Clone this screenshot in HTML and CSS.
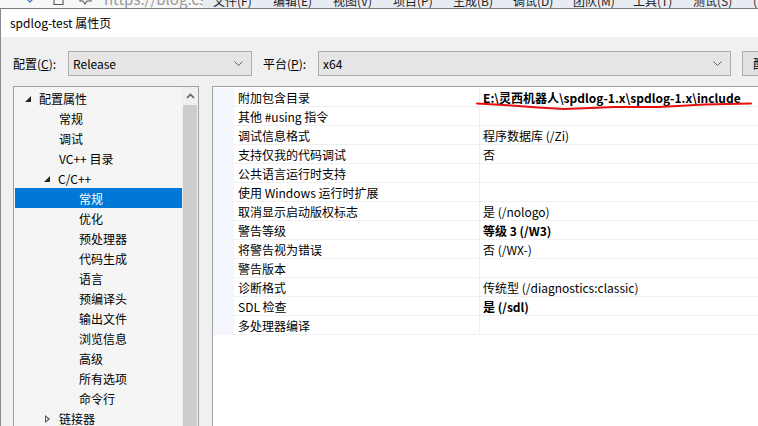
FILE: index.html
```html
<!DOCTYPE html>
<html lang="zh-CN">
<head>
    <meta charset="UTF-8">
    <title>spdlog-test 属性页</title>
    <link rel="stylesheet" href="styles.css">
</head>
<body>

    <div id="strip">
        <div class="browser-bar">
            <svg class="ico ico-fav" width="12" height="10" viewBox="0 0 12 10"><path d="M1 0 L6 5 L11 0" fill="none" stroke="#3a66c4" stroke-width="1.2"/></svg>
            <svg class="ico ico-tab" width="11" height="10" viewBox="0 0 11 10"><path d="M1 0 V7.5 H10 V0" fill="none" stroke="#555" stroke-width="1.1"/></svg>
            <svg class="ico ico-chat" width="13" height="10" viewBox="0 0 13 10"><path d="M1 0 V4 H4 L6 7 L8 4 H12 V0" fill="none" stroke="#555" stroke-width="1.1"/></svg>
            <span class="url">https://blog.csdn.net</span>
        </div>
        <div class="menu-bar">
            <span>文件(F)</span>
            <span>编辑(E)</span>
            <span>视图(V)</span>
            <span>项目(P)</span>
            <span>生成(B)</span>
            <span>调试(D)</span>
            <span>团队(M)</span>
            <span>工具(T)</span>
            <span>测试(S)</span>
            <span>(</span>
        </div>
    </div>

    <div id="dialog">
        <div class="title-bar">spdlog-test 属性页</div>

        <div class="dialog-body">
            <div class="config-row">
                <span class="label">配置(<u>C</u>):</span>
                <div class="combo combo-config">
                    <span>Release</span>
                    <svg width="9" height="6" viewBox="0 0 9 6"><path d="M0.5 0.5 L4.5 4.5 L8.5 0.5" fill="none" stroke="#606060" stroke-width="1"/></svg>
                </div>
                <span class="label label-platform">平台(<u>P</u>):</span>
                <div class="combo combo-platform">
                    <span>x64</span>
                    <svg width="9" height="6" viewBox="0 0 9 6"><path d="M0.5 0.5 L4.5 4.5 L8.5 0.5" fill="none" stroke="#606060" stroke-width="1"/></svg>
                </div>
                <div class="manager-btn">配置管理器(<u>O</u>)...</div>
            </div>

            <div class="panes">
                <div id="tree">
                    <ul class="tree-items">
                        <li class="lvl0"><span class="tw open"></span>配置属性</li>
                        <li class="lvl1">常规</li>
                        <li class="lvl1">调试</li>
                        <li class="lvl1">VC++ 目录</li>
                        <li class="lvl1"><span class="tw open"></span>C/C++</li>
                        <li class="lvl2 selected">常规</li>
                        <li class="lvl2">优化</li>
                        <li class="lvl2">预处理器</li>
                        <li class="lvl2">代码生成</li>
                        <li class="lvl2">语言</li>
                        <li class="lvl2">预编译头</li>
                        <li class="lvl2">输出文件</li>
                        <li class="lvl2">浏览信息</li>
                        <li class="lvl2">高级</li>
                        <li class="lvl2">所有选项</li>
                        <li class="lvl2">命令行</li>
                        <li class="lvl1"><span class="tw closed"></span>链接器</li>
                    </ul>
                    <div class="scrollbar">
                        <div class="scroll-up">
                            <svg width="9" height="6" viewBox="0 0 9 6"><path d="M1 5 L4.5 1.5 L8 5" fill="none" stroke="#606060" stroke-width="1.6"/></svg>
                        </div>
                        <div class="scroll-thumb"></div>
                    </div>
                </div>

                <div id="props">
                    <div class="prop-row"><div class="gutter"></div><div class="name">附加包含目录</div><div class="value bold">E:\灵西机器人\spdlog-1.x\spdlog-1.x\include</div></div>
                    <div class="prop-row"><div class="gutter"></div><div class="name">其他 #using 指令</div><div class="value"></div></div>
                    <div class="prop-row"><div class="gutter"></div><div class="name">调试信息格式</div><div class="value">程序数据库 (/Zi)</div></div>
                    <div class="prop-row"><div class="gutter"></div><div class="name">支持仅我的代码调试</div><div class="value">否</div></div>
                    <div class="prop-row"><div class="gutter"></div><div class="name">公共语言运行时支持</div><div class="value"></div></div>
                    <div class="prop-row"><div class="gutter"></div><div class="name">使用 Windows 运行时扩展</div><div class="value"></div></div>
                    <div class="prop-row"><div class="gutter"></div><div class="name">取消显示启动版权标志</div><div class="value">是 (/nologo)</div></div>
                    <div class="prop-row"><div class="gutter"></div><div class="name">警告等级</div><div class="value bold">等级 3 (/W3)</div></div>
                    <div class="prop-row"><div class="gutter"></div><div class="name">将警告视为错误</div><div class="value">否 (/WX-)</div></div>
                    <div class="prop-row"><div class="gutter"></div><div class="name">警告版本</div><div class="value"></div></div>
                    <div class="prop-row"><div class="gutter"></div><div class="name">诊断格式</div><div class="value">传统型 (/diagnostics:classic)</div></div>
                    <div class="prop-row"><div class="gutter"></div><div class="name">SDL 检查</div><div class="value bold">是 (/sdl)</div></div>
                    <div class="prop-row"><div class="gutter"></div><div class="name">多处理器编译</div><div class="value"></div></div>

                    <!-- hand-drawn red mark under the include path -->
                    <svg class="scribble" width="600" height="40" viewBox="0 0 600 40">
                        <path d="M264 16.5 L291 18 L325 20.5 L351 22 L378 21 L401 20 L445 20 L465 19 L491 17.5 L538 16.5" fill="none" stroke="#e3100f" stroke-width="2" stroke-linecap="round" stroke-linejoin="round"/>
                    </svg>
                </div>
            </div>
        </div>
    </div>

</body>
</html>
```

FILE: styles.css
```css
html, body {
    margin: 0;
    padding: 0;
}

body {
    width: 758px;
    height: 426px;
    overflow: hidden;
    font-family: "Noto Sans CJK SC", sans-serif;
    font-size: 12px;
    color: #000;
    background-color: #f0f0f0;
}

/* what is behind the dialog, cut off at the top */
#strip {
    display: flex;
    height: 8px;
    overflow: hidden;
}

.browser-bar {
    display: flex;
    align-items: flex-end;
    width: 203px;
    flex-shrink: 0;
    overflow: hidden;
    background-color: #f7f7f7;
}

.browser-bar .ico {
    margin-bottom: 1px;
    flex-shrink: 0;
}

.ico-fav { margin-left: 24px; }
.ico-tab { margin-left: 17px; }
.ico-chat { margin-left: 15px; }

.url {
    margin-left: 12px;
    font-size: 15px;
    line-height: 18px;
    color: #999;
    white-space: nowrap;
}

.menu-bar {
    display: flex;
    align-items: flex-end;
    flex: 1;
    padding-left: 10px;
    background-color: #e9ebf2;
}

.menu-bar span {
    width: 60px;
    flex-shrink: 0;
    line-height: 14px;
    color: #1e1e1e;
    white-space: nowrap;
}

#dialog {
    border-left: 1px solid #8a8a8a;
    border-top: 1px solid #7a7a7a;
}

.title-bar {
    height: 28px;
    line-height: 28px;
    padding-left: 9px;
    background-color: #fff;
}

.dialog-body {
    padding: 14px 0 0 12px;
}

.config-row {
    display: flex;
    align-items: center;
    height: 25px;
    white-space: nowrap;
}

.label {
    width: 55px;
    flex-shrink: 0;
}

.label-platform {
    margin-left: 11px;
}

.combo {
    display: flex;
    justify-content: space-between;
    align-items: center;
    box-sizing: border-box;
    height: 25px;
    padding: 0 8px 0 4px;
    flex-shrink: 0;
    background-color: #e5e5e5;
    border: 1px solid #adadad;
}

.combo-config {
    width: 184px;
}

.combo-platform {
    width: 413px;
}

.manager-btn {
    box-sizing: border-box;
    height: 25px;
    line-height: 23px;
    margin-left: 11px;
    padding: 0 10px;
    flex-shrink: 0;
    background-color: #e1e1e1;
    border: 1px solid #adadad;
}

.panes {
    display: flex;
    gap: 13px;
    margin-top: 10px;
    height: 360px;
}

/* tree */
#tree {
    display: flex;
    width: 186px;
    box-sizing: border-box;
    flex-shrink: 0;
    background-color: #f5f5f5;
    border: 1px solid #a0a0a0;
}

.tree-items {
    flex: 1;
    list-style: none;
    margin: 0;
    padding: 1px 0 0 1px;
}

.tree-items li {
    height: 20px;
    line-height: 21px;
    white-space: nowrap;
}

.tree-items .lvl0 { padding-left: 24px; }
.tree-items .lvl1 { padding-left: 44px; }
.tree-items .lvl2 { padding-left: 64px; }

.tree-items .selected {
    background-color: #0078d7;
    color: #fff;
}

.tw {
    display: inline-block;
    vertical-align: middle;
}

.tw.open {
    width: 0;
    height: 0;
    margin: -3px 8px 0 -15px;
    border-left: 6px solid transparent;
    border-bottom: 6px solid #262626;
}

.tree-items .lvl0 .tw.open {
    margin-left: -14px;
    margin-right: 8px;
}

.tw.closed {
    position: relative;
    width: 5px;
    height: 9px;
    margin: -2px 9px 0 -14px;
}

.tw.closed::before {
    content: "";
    position: absolute;
    left: 0;
    top: 0;
    border-top: 4.5px solid transparent;
    border-bottom: 4.5px solid transparent;
    border-left: 5px solid #555;
}

.tw.closed::after {
    content: "";
    position: absolute;
    left: 1px;
    top: 2px;
    border-top: 2.5px solid transparent;
    border-bottom: 2.5px solid transparent;
    border-left: 2.5px solid #f5f5f5;
}

.scrollbar {
    display: flex;
    flex-direction: column;
    width: 16px;
    flex-shrink: 0;
    background-color: #f0f0f0;
}

.scroll-up {
    display: flex;
    justify-content: center;
    align-items: center;
    height: 18px;
}

.scroll-thumb {
    flex: 1;
    margin: 0 1px;
    background-color: #cdcdcd;
}

/* property grid */
#props {
    position: relative;
    width: 600px;
    flex-shrink: 0;
    box-sizing: border-box;
    padding-top: 1px;
    background-color: #fff;
    border-left: 1px solid #a0a0a0;
    border-top: 1px solid #a0a0a0;
}

.prop-row {
    display: flex;
    height: 19px;
    line-height: 19px;
    white-space: nowrap;
}

.gutter {
    width: 21px;
    flex-shrink: 0;
    background-color: #f3f6fb;
}

.name {
    width: 245px;
    flex-shrink: 0;
    box-sizing: border-box;
    padding-left: 4px;
    border-bottom: 1px solid #f0f0f0;
}

.value {
    flex: 1;
    padding-left: 3px;
    border-left: 1px solid #f0f0f0;
    border-bottom: 1px solid #f0f0f0;
}

.bold {
    font-weight: bold;
}

.scribble {
    position: absolute;
    left: 0;
    top: 0;
}
```
